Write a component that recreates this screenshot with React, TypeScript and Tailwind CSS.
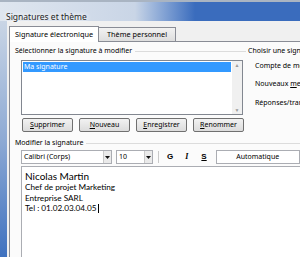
const ui = { fontFamily: '"Noto Sans", "Open Sans", sans-serif' };
const calibri = { fontFamily: 'Lato, "Open Sans", sans-serif' };

const Btn: React.FC<{ k: string; rest: string }> = ({ k, rest }) => (
  <button className="h-[14px] w-[51px] rounded-[2px] border border-[#707070] bg-gradient-to-b from-[#f2f2f2] to-[#dcdcdc] text-[7px] leading-[12px] text-black">
    <span className="underline">{k}</span>
    {rest}
  </button>
);

const Arrow = () => (
  <div className="flex h-full w-[8px] items-center justify-center border-l border-[#c9c9c9] bg-[#eaeaea]">
    <svg width="5" height="3" viewBox="0 0 5 3">
      <path d="M0 0h5L2.5 3z" fill="#111" />
    </svg>
  </div>
);

export default function App() {
  return (
    <div className="relative flex h-[257px] w-[300px] flex-col overflow-hidden bg-[#f0f0f0]" style={ui}>
      {/* title bar */}
      <div className="h-[21px] shrink-0 border-t-2 border-[#a9b4c2] bg-gradient-to-r from-[#dfe6ef] via-[#c9d5e6] via-45% to-[#3a6cbd] to-65% pl-[6px]">
        <span className="text-[8.5px] leading-[18px] text-[#1e1e1e] [text-shadow:0_0_6px_#fff,0_0_4px_#fff]">
          Signatures et thème
        </span>
      </div>
      <div className="flex min-h-0 flex-1">
        {/* left frame */}
        <div className="w-[7px] shrink-0 bg-gradient-to-b from-[#c9d5e5] via-[#8eaad4] to-[#3f71bf]" />
        <div className="flex min-w-0 flex-1 flex-col pl-[2px] pt-[4px]">
          {/* tabs */}
          <div className="relative z-10 flex h-[16px] items-end">
            <div className="-mb-px flex h-[16px] items-center border border-b-0 border-[#898c95] bg-white px-[5px] text-[7.3px] text-black">
              Signature électronique
            </div>
            <div className="flex h-[14px] items-center border border-l-0 border-b-0 border-[#898c95] bg-gradient-to-b from-[#f2f2f2] to-[#dedede] px-[8px] text-[7.3px] text-black">
              Thème personnel
            </div>
          </div>
          {/* tab page */}
          <div className="flex min-h-0 flex-1 flex-col border-l border-t border-[#898c95] bg-[#fbfbfb] pl-[5px]">
            <div className="flex">
              <div className="w-[231px] shrink-0">
                <div className="mt-[4px] flex items-center gap-[3px] text-[7px] leading-[10px] text-black">
                  <span className="whitespace-nowrap">Sélectionner la signature à modifier</span>
                  <div className="h-px flex-1 bg-[#dcdcdc]" />
                </div>
                <div className="ml-[6px] mt-[4px] flex h-[55px] w-[222px] border border-[#828790] bg-white">
                  <div className="flex-1 p-[1px]">
                    <div className="h-[10px] bg-[#3399ff] pl-[1px] text-[7px] leading-[10px] text-white">Ma signature</div>
                  </div>
                  <div className="flex w-[10px] flex-col justify-between bg-[#f0f0f0]">
                    <span className="text-center text-[5px] leading-[8px] text-[#9a9a9a]">▲</span>
                    <span className="text-center text-[5px] leading-[8px] text-[#9a9a9a]">▼</span>
                  </div>
                </div>
                <div className="ml-[7px] mt-[3px] flex gap-[6px]">
                  <Btn k="S" rest="upprimer" />
                  <Btn k="N" rest="ouveau" />
                  <Btn k="E" rest="nregistrer" />
                  <Btn k="R" rest="enommer" />
                </div>
              </div>
              <div className="ml-[2px] whitespace-nowrap pt-[4px] text-[7px] text-black">
                <div className="leading-[10px]">Choisir une signature par défaut</div>
                <div className="mt-[5px] pl-[7px] leading-[10px]">Compte de messagerie :</div>
                <div className="mt-[8px] pl-[7px] leading-[10px]">
                  Nouveaux <span className="underline">m</span>essages :
                </div>
                <div className="mt-[9px] pl-[7px] leading-[10px]">Réponses/transferts :</div>
              </div>
            </div>
            <div className="mt-[6px] flex items-center gap-[3px] text-[7px] leading-[10px] text-black">
              <span className="whitespace-nowrap">Modifier la signature</span>
              <div className="h-px flex-1 bg-[#dcdcdc]" />
            </div>
            {/* toolbar */}
            <div className="ml-[6px] mt-[2px] flex h-[14px] items-center text-[7px] text-black">
              <div className="flex h-full w-[91px] items-center border border-[#abadb3] bg-white">
                <span className="flex-1 pl-[2px]">Calibri (Corps)</span>
                <Arrow />
              </div>
              <div className="ml-[4px] flex h-full w-[37px] items-center border border-[#abadb3] bg-white">
                <span className="flex-1 pl-[2px]">10</span>
                <Arrow />
              </div>
              <div className="ml-[5px] h-[12px] w-px bg-[#c9c9c9]" />
              <span className="ml-[8px] text-[8px] font-bold" style={{ fontFamily: '"Liberation Sans", sans-serif' }}>G</span>
              <span className="ml-[12px] text-[8px] font-bold italic" style={{ fontFamily: '"Liberation Serif", serif' }}>I</span>
              <span className="ml-[13px] text-[8px] font-bold underline" style={{ fontFamily: '"Liberation Sans", sans-serif' }}>S</span>
              <div className="ml-[9px] flex h-full w-[84px] items-center justify-center border border-[#abadb3] bg-white">
                Automatique
              </div>
            </div>
            {/* editor */}
            <div className="ml-[6px] mt-[2px] flex-1 border-l border-t border-[#abadb3] bg-white pl-[3px] pt-[3px] text-black" style={calibri}>
              <div className="text-[10px] leading-[12px]">Nicolas Martin</div>
              <div className="text-[8.2px] leading-[10.5px]">Chef de projet Marketing</div>
              <div className="text-[8.2px] leading-[10.5px]">Entreprise SARL</div>
              <div className="flex items-center text-[8.2px] leading-[10.5px]">
                Tel : 01.02.03.04.05
                <span className="ml-px inline-block h-[9px] w-px bg-black" />
              </div>
            </div>
          </div>
        </div>
      </div>
    </div>
  );
}
